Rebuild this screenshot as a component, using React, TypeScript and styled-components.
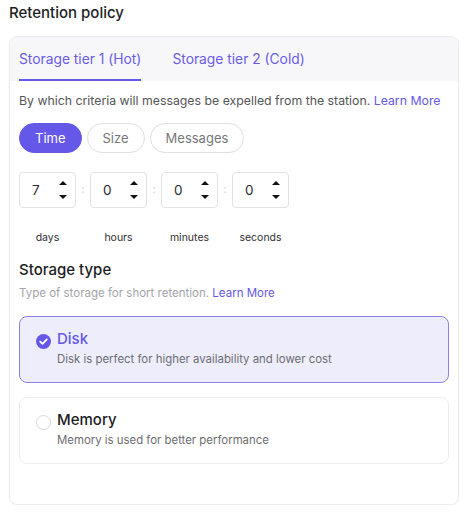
import styled, { createGlobalStyle } from 'styled-components'

const GlobalStyle = createGlobalStyle`
  html, body {
    margin: 0;
    padding: 0;
    background: #ffffff;
  }
  body {
    font-family: Inter, 'Noto Sans', sans-serif;
    color: #1d1d1f;
    -webkit-font-smoothing: antialiased;
  }
`

const purple = '#6557e8'

const Page = styled.div({
  width: '474px',
  boxSizing: 'border-box',
  padding: '3px 15px 0 9px',
})

const Title = styled.div({
  fontSize: '15px',
  lineHeight: '20px',
  fontWeight: 500,
  color: '#1d1d1f',
})

const Card = styled.div({
  marginTop: '13px',
  border: '1px solid #ececf0',
  borderRadius: '8px',
  overflow: 'hidden',
  paddingBottom: '40px',
  boxShadow: '0 1px 2px rgba(0,0,0,0.03)',
})

const TabBar = styled.div({
  display: 'flex',
  gap: '31px',
  height: '44px',
  padding: '0 9px',
  background: '#f7f7f9',
})

const Tab = styled.div<{ $active?: boolean }>(({ $active }) => ({
  display: 'flex',
  alignItems: 'center',
  fontSize: '13.8px',
  color: '#6a5ce6',
  borderBottom: $active ? `2px solid ${purple}` : '2px solid transparent',
  paddingTop: '2px',
  boxSizing: 'border-box',
}))

const Body = styled.div({
  padding: '0 9px',
})

const Description = styled.div({
  marginTop: '11px',
  fontSize: '12.3px',
  lineHeight: '18px',
  color: '#555558',
  whiteSpace: 'nowrap',
})

const Link = styled.span({
  color: purple,
})

const Pills = styled.div({
  display: 'flex',
  gap: '5px',
  marginTop: '13px',
})

const Pill = styled.div<{ $active?: boolean }>(({ $active }) => ({
  height: '30px',
  boxSizing: 'border-box',
  padding: '0 15px',
  display: 'flex',
  alignItems: 'center',
  borderRadius: '15px',
  fontSize: '13px',
  background: $active ? purple : '#ffffff',
  color: $active ? '#ffffff' : '#77777c',
  border: $active ? `1px solid ${purple}` : '1px solid #dedee4',
}))

const TimeRow = styled.div({
  display: 'flex',
  marginTop: '19px',
})

const NumberBox = styled.div({
  width: '57px',
  height: '36px',
  boxSizing: 'border-box',
  border: '1px solid #e2e2e7',
  borderRadius: '4px',
  display: 'flex',
  alignItems: 'center',
  justifyContent: 'space-between',
  padding: '0 8px 0 12px',
  fontSize: '13.5px',
  color: '#2a2a2e',
})

const Spinner = styled.div({
  display: 'flex',
  flexDirection: 'column',
  gap: '10px',
})

const Separator = styled.div({
  width: '14px',
  display: 'flex',
  justifyContent: 'center',
  alignItems: 'center',
  paddingBottom: '3px',
  color: '#cfcfd4',
  fontSize: '11px',
})

const LabelRow = styled.div({
  display: 'flex',
  gap: '14px',
  marginTop: '23px',
})

const UnitLabel = styled.div({
  width: '57px',
  textAlign: 'center',
  fontSize: '10.5px',
  lineHeight: '14px',
  color: '#2f2f33',
})

const SectionTitle = styled.div({
  marginTop: '15px',
  fontSize: '15px',
  lineHeight: '20px',
  fontWeight: 500,
  color: '#1d1d1f',
})

const SectionHint = styled.div({
  marginTop: '5px',
  fontSize: '11.5px',
  lineHeight: '16px',
  color: '#a4a4ab',
})

const Options = styled.div({
  display: 'flex',
  flexDirection: 'column',
  gap: '14px',
  marginTop: '15px',
})

const Option = styled.div<{ $selected?: boolean }>(({ $selected }) => ({
  height: '67px',
  boxSizing: 'border-box',
  borderRadius: '8px',
  border: $selected ? '1px solid #8c80ea' : '1px solid #ededf1',
  background: $selected ? '#eeedfc' : '#ffffff',
  padding: '12px 16px 0 16px',
  display: 'flex',
  gap: '6px',
}))

const OptionIcon = styled.div({
  width: '15px',
  height: '20px',
  display: 'flex',
  alignItems: 'center',
  paddingTop: '2px',
})

const OptionText = styled.div({
  display: 'flex',
  flexDirection: 'column',
  gap: '2px',
})

const OptionTitle = styled.div<{ $selected?: boolean }>(({ $selected }) => ({
  fontSize: '15px',
  lineHeight: '20px',
  fontWeight: 500,
  color: $selected ? purple : '#1d1d1f',
}))

const OptionHint = styled.div({
  fontSize: '11.4px',
  lineHeight: '16px',
  color: '#6c6c72',
})

const Radio = styled.div({
  width: '15px',
  height: '15px',
  boxSizing: 'border-box',
  borderRadius: '50%',
  border: '1px solid #d8d8de',
  background: '#ffffff',
})

const Arrow = ({ up }: { up?: boolean }) => (
  <svg width='8' height='4' viewBox='0 0 8 4'>
    <path d={up ? 'M4 0 L8 4 L0 4 Z' : 'M0 0 L8 0 L4 4 Z'} fill='#111' />
  </svg>
)

const CheckCircle = () => (
  <svg width='15' height='15' viewBox='0 0 15 15'>
    <circle cx='7.5' cy='7.5' r='7.5' fill={purple} />
    <path
      d='M4.2 7.7 L6.5 9.9 L10.8 5.4'
      fill='none'
      stroke='#ffffff'
      strokeWidth='1.8'
      strokeLinecap='round'
      strokeLinejoin='round'
    />
  </svg>
)

const units = [
  { label: 'days', value: 7 },
  { label: 'hours', value: 0 },
  { label: 'minutes', value: 0 },
  { label: 'seconds', value: 0 },
]

export default function App() {
  return (
    <Page>
      <GlobalStyle />
      <Title>Retention policy</Title>
      <Card>
        <TabBar>
          <Tab $active>Storage tier 1 (Hot)</Tab>
          <Tab>Storage tier 2 (Cold)</Tab>
        </TabBar>
        <Body>
          <Description>
            By which criteria will messages be expelled from the station.{' '}
            <Link>Learn More</Link>
          </Description>
          <Pills>
            <Pill $active>Time</Pill>
            <Pill>Size</Pill>
            <Pill>Messages</Pill>
          </Pills>
          <TimeRow>
            {units.map((u, i) => (
              <Box key={u.label} index={i} value={u.value} />
            ))}
          </TimeRow>
          <LabelRow>
            {units.map((u) => (
              <UnitLabel key={u.label}>{u.label}</UnitLabel>
            ))}
          </LabelRow>
          <SectionTitle>Storage type</SectionTitle>
          <SectionHint>
            Type of storage for short retention. <Link>Learn More</Link>
          </SectionHint>
          <Options>
            <Option $selected>
              <OptionIcon>
                <CheckCircle />
              </OptionIcon>
              <OptionText>
                <OptionTitle $selected>Disk</OptionTitle>
                <OptionHint>Disk is perfect for higher availability and lower cost</OptionHint>
              </OptionText>
            </Option>
            <Option>
              <OptionIcon>
                <Radio />
              </OptionIcon>
              <OptionText>
                <OptionTitle>Memory</OptionTitle>
                <OptionHint>Memory is used for better performance</OptionHint>
              </OptionText>
            </Option>
          </Options>
        </Body>
      </Card>
    </Page>
  )
}

const Box = ({ index, value }: { index: number; value: number }) => (
  <>
    {index > 0 && <Separator>:</Separator>}
    <NumberBox>
      <span>{value}</span>
      <Spinner>
        <Arrow up />
        <Arrow />
      </Spinner>
    </NumberBox>
  </>
)
